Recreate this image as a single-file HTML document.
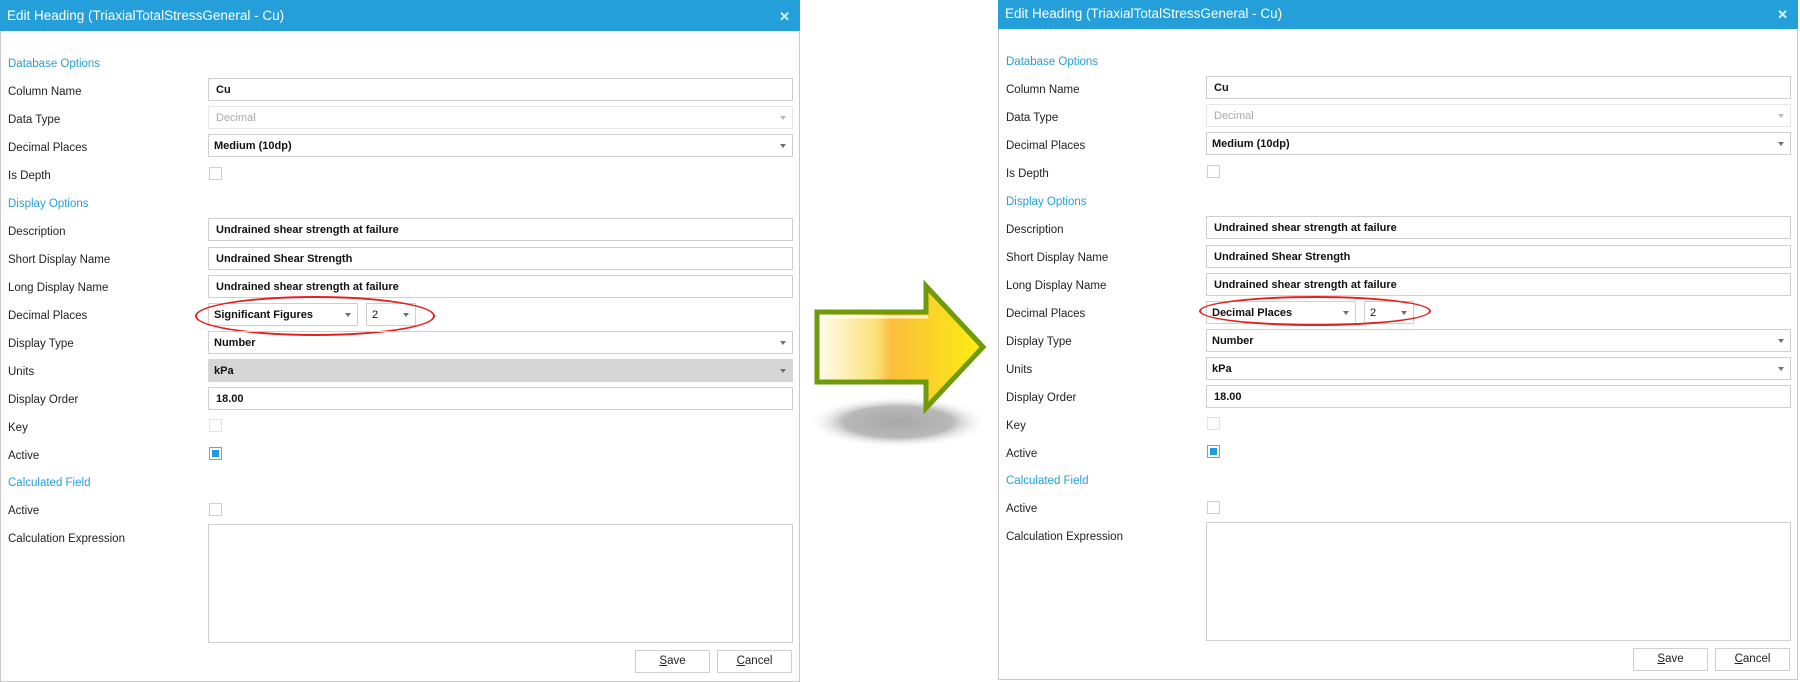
<!DOCTYPE html>
<html><head><meta charset="utf-8"><style>
*{box-sizing:border-box;margin:0;padding:0}
body{width:1800px;height:682px;background:#fff;position:relative;overflow:hidden;font-family:"Liberation Sans",sans-serif;font-size:11.5px;color:#222}
.dlg{position:absolute;width:800px;height:682px;border:1px solid #c8c8c8;background:#fff}
.dlg>*{position:absolute}
.tb{left:-1px;top:-1px;width:800px;height:31px;background:#259fda;color:#fff;font-size:13.5px;line-height:31px;padding-left:7px}
.x{right:9px;top:0;color:#e8f4fb;font-size:13px;line-height:31px;font-weight:bold}
.h{left:7px;color:#259fda;font-size:11.5px}
.l{left:7px;font-size:11.5px;color:#222}
.in{left:207px;width:585px;height:23px;border:1px solid #cfcfcf;padding-left:7px;display:flex;align-items:center;font-weight:bold;font-size:11px;color:#111}
.dd::after{content:"";position:absolute;right:6px;top:9px;border-left:3.5px solid transparent;border-right:3.5px solid transparent;border-top:4px solid #707070}
.dis{border-color:#e6e6e6;color:#aaa;font-weight:normal}
.dis::after{border-top-color:#bbb}
.cb{left:208px;width:13px;height:13px;border:1px solid #cfcfcf}
.cb.on{border-color:#999}
.cb.on::after{content:"";position:absolute;left:2px;top:2px;width:7px;height:7px;background:#1e9be0}
.btn{width:75px;height:23px;border:1px solid #cfcfcf;text-align:center;line-height:21px;font-size:11.5px}
.btn u{text-decoration:underline}
.ell{border:2px solid #e32020;border-radius:50%}
</style></head><body>

<div class="dlg" style="left:0;top:0">
<div class="tb">Edit Heading (TriaxialTotalStressGeneral - Cu)</div><div class="x">✕</div>
<div class="h" style="top:57px">Database Options</div>
<div class="l" style="top:85px">Column Name</div><div class="in" style="top:77px">Cu</div>
<div class="l" style="top:113px">Data Type</div><div class="in dd dis" style="top:105px">Decimal</div>
<div class="l" style="top:141px">Decimal Places</div><div class="in dd" style="top:133px;padding-left:5px">Medium (10dp)</div>
<div class="l" style="top:169px">Is Depth</div><div class="cb" style="top:166px"></div>
<div class="h" style="top:197px">Display Options</div>
<div class="l" style="top:225px">Description</div><div class="in" style="top:217px">Undrained shear strength at failure</div>
<div class="l" style="top:253px">Short Display Name</div><div class="in" style="top:246px">Undrained Shear Strength</div>
<div class="l" style="top:281px">Long Display Name</div><div class="in" style="top:274px">Undrained shear strength at failure</div>
<div class="l" style="top:309px">Decimal Places</div>
<div class="in dd" style="top:302px;width:150px;padding-left:5px">Significant Figures</div>
<div class="in dd" style="top:302px;left:365px;width:50px;padding-left:5px;font-weight:normal">2</div>
<div class="ell" style="left:194px;top:295px;width:240px;height:40px"></div>
<div class="l" style="top:337px">Display Type</div><div class="in dd" style="top:330px;padding-left:5px">Number</div>
<div class="l" style="top:365px">Units</div><div class="in dd" style="top:358px;padding-left:5px;background:#d6d6d6;border-color:#d6d6d6">kPa</div>
<div class="l" style="top:393px">Display Order</div><div class="in" style="top:386px">18.00</div>
<div class="l" style="top:421px">Key</div><div class="cb" style="top:418px;border-color:#e3e3e3"></div>
<div class="l" style="top:449px">Active</div><div class="cb on" style="top:446px"></div>
<div class="h" style="top:476px">Calculated Field</div>
<div class="l" style="top:504px">Active</div><div class="cb" style="top:502px"></div>
<div class="l" style="top:532px">Calculation Expression</div>
<div class="in" style="top:523px;height:119px"></div>
<div class="btn" style="left:634px;top:649px"><u>S</u>ave</div>
<div class="btn" style="left:716px;top:649px"><u>C</u>ancel</div>
</div>

<svg style="position:absolute;left:800px;top:270px" width="200" height="180">
<defs>
<linearGradient id="g" x1="0" x2="1"><stop offset="0" stop-color="#fffdf0"/><stop offset="0.35" stop-color="#fbe27a"/><stop offset="0.45" stop-color="#fbbd3c"/><stop offset="1" stop-color="#fbef10"/></linearGradient>
<radialGradient id="s"><stop offset="0" stop-color="#a8a8a8"/><stop offset="0.6" stop-color="#b8b8b8"/><stop offset="1" stop-color="#fff" stop-opacity="0"/></radialGradient>
</defs>
<ellipse cx="98" cy="152" rx="90" ry="26" fill="url(#s)"/>
<path d="M17 42 H126 V16 L183 77 L126 138 V112 H17 Z" fill="url(#g)" stroke="#6f9a0c" stroke-width="5" stroke-linejoin="miter"/>
<path d="M20 47 H128" stroke="#fff" stroke-width="3" opacity=".7"/>
</svg>

<div class="dlg" style="left:998px;top:-2px;height:682px">
<div class="tb">Edit Heading (TriaxialTotalStressGeneral - Cu)</div><div class="x">✕</div>
<div class="h" style="top:57px">Database Options</div>
<div class="l" style="top:85px">Column Name</div><div class="in" style="top:77px">Cu</div>
<div class="l" style="top:113px">Data Type</div><div class="in dd dis" style="top:105px">Decimal</div>
<div class="l" style="top:141px">Decimal Places</div><div class="in dd" style="top:133px;padding-left:5px">Medium (10dp)</div>
<div class="l" style="top:169px">Is Depth</div><div class="cb" style="top:166px"></div>
<div class="h" style="top:197px">Display Options</div>
<div class="l" style="top:225px">Description</div><div class="in" style="top:217px">Undrained shear strength at failure</div>
<div class="l" style="top:253px">Short Display Name</div><div class="in" style="top:246px">Undrained Shear Strength</div>
<div class="l" style="top:281px">Long Display Name</div><div class="in" style="top:274px">Undrained shear strength at failure</div>
<div class="l" style="top:309px">Decimal Places</div>
<div class="in dd" style="top:302px;width:150px;padding-left:5px">Decimal Places</div>
<div class="in dd" style="top:302px;left:365px;width:50px;padding-left:5px;font-weight:normal">2</div>
<div class="ell" style="left:200px;top:297px;width:232px;height:30px"></div>
<div class="l" style="top:337px">Display Type</div><div class="in dd" style="top:330px;padding-left:5px">Number</div>
<div class="l" style="top:365px">Units</div><div class="in dd" style="top:358px;padding-left:5px">kPa</div>
<div class="l" style="top:393px">Display Order</div><div class="in" style="top:386px">18.00</div>
<div class="l" style="top:421px">Key</div><div class="cb" style="top:418px;border-color:#e3e3e3"></div>
<div class="l" style="top:449px">Active</div><div class="cb on" style="top:446px"></div>
<div class="h" style="top:476px">Calculated Field</div>
<div class="l" style="top:504px">Active</div><div class="cb" style="top:502px"></div>
<div class="l" style="top:532px">Calculation Expression</div>
<div class="in" style="top:523px;height:119px"></div>
<div class="btn" style="left:634px;top:649px"><u>S</u>ave</div>
<div class="btn" style="left:716px;top:649px"><u>C</u>ancel</div>
</div>
</body></html>
